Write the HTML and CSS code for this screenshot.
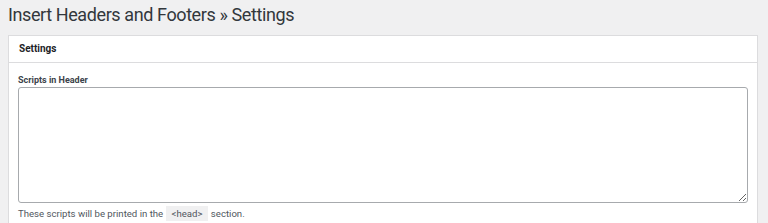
FILE: index.html
```html
<!DOCTYPE html>
<html>
<head>
<meta charset="utf-8">
<link rel="stylesheet" href="styles.css">
</head>
<body>
<div class="wrap">
  <h1 class="title">Insert Headers and Footers » Settings</h1>
  <div class="card">
    <div class="card-head">Settings</div>
    <div class="card-body">
      <label class="label" for="hdr">Scripts in Header</label>
      <textarea id="hdr" class="area"></textarea>
      <p class="help">These scripts will be printed in the <code class="code">&lt;head&gt;</code> section.</p>
    </div>
  </div>
</div>
</body>
</html>
```
FILE: styles.css
```css
html, body {
  margin: 0;
  padding: 0;
  background: #f0f0f1;
  font-family: Roboto, "Liberation Sans", sans-serif;
  color: #3c434a;
  overflow: hidden;
}
.wrap {
  padding: 0 10px 0 8px;
}
.title {
  margin: 0;
  padding: 3px 0 0 0;
  height: 35px;
  box-sizing: border-box;
  font-size: 18px;
  font-weight: 400;
  letter-spacing: -0.4px;
  line-height: 24px;
  color: #32373c;
}
.card {
  background: #fff;
  border: 1px solid #dcdcde;
  border-bottom: 0;
  height: 188px;
  box-sizing: border-box;
}
.card-head {
  height: 27px;
  box-sizing: border-box;
  border-bottom: 1px solid #dcdcde;
  padding: 0 10px;
  font-size: 10px;
  font-weight: 700;
  line-height: 26px;
  color: #1d2327;
}
.card-body {
  padding: 10px 9px 0 9px;
}
.label {
  display: block;
  font-size: 9px;
  font-weight: 700;
  line-height: 14px;
  color: #3c434a;
  margin-bottom: 0;
}
.area {
  display: block;
  width: 100%;
  height: 116px;
  box-sizing: border-box;
  border: 1px solid #a7aaad;
  border-radius: 3px;
  margin: 0;
  padding: 4px;
  background: #fff;
}
.help {
  margin: 4px 0 0 0;
  font-size: 9.6px;
  line-height: 14px;
  color: #50575e;
}
.code {
  font-family: Roboto, "Liberation Sans", sans-serif;
  background: #f0f0f1;
  padding: 2px 6px;
  font-size: 9.6px;
}
```
